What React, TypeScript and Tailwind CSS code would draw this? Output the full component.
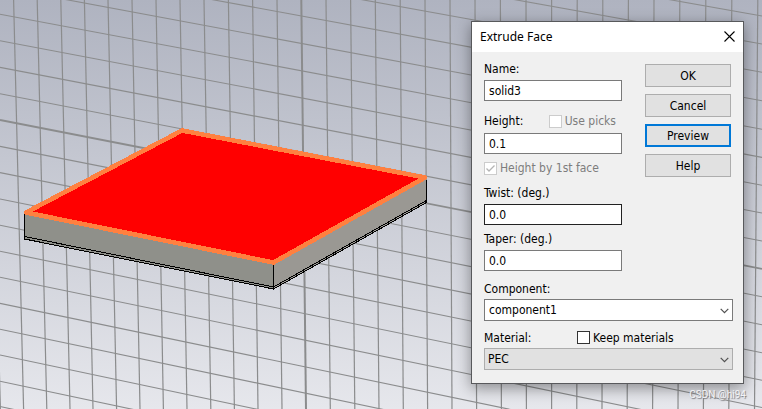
import { useState } from "react";
import type { ReactNode } from "react";

/* ------------------------------------------------------------------ */
/*  Scene geometry                                                     */
/* ------------------------------------------------------------------ */

// [x at the top edge, x at the bottom edge]
const uprights: [number, number][] = [
  [-11, 0], [13.6, 23.6], [37.2, 46.8], [60.8, 70], [84.4, 93], [108, 116.6],
  [132, 140], [156, 163.4], [180, 187], [204, 210.8], [228.4, 234.4],
  [252.6, 258], [277, 282], [301.3, 306], [326, 330.3], [350.6, 354.8],
  [375.3, 379], [400.2, 403.3], [425, 427.6], [450, 452], [475, 476.6],
  [500.4, 501.4], [526, 526.4], [551.6, 551.6], [577.2, 576.8],
  [602.8, 602], [628.4, 627.2], [654, 652.6], [679.8, 678], [705.8, 703.4],
  [731.8, 728.8], [757.8, 754.5],
];

// [y at the left edge, y at the right edge]
const diagonals: [number, number][] = [
  [-119, 16], [-92.7, 44], [-66, 72.3], [-39.4, 100.7], [-12.7, 129.2],
  [14.2, 157.4], [40.8, 185.2], [67.4, 213], [93.8, 241], [120, 268.8],
  [146.4, 296.7], [172.6, 324.7], [199, 352.7], [225.2, 380.3],
  [251.2, 407.5], [277.2, 434.5], [303.4, 461.8], [329.2, 488.8],
  [355, 515.8], [381.2, 542.8], [406.5, 569.8],
];

function Viewport() {
  return (
    <svg
      className="absolute inset-0 h-full w-full"
      viewBox="0 0 762 409"
      preserveAspectRatio="xMinYMin slice"
      aria-hidden="true"
    >
      <g stroke="#8b8c8d">
        {uprights.map(([top, bottom], i) => (
          <line key={top} x1={top} y1="0" x2={bottom} y2="409" strokeWidth={i === 13 || i === 0 ? 2 : 1.2} />
        ))}
        {diagonals.map(([left, right], i) => (
          <line key={left} x1="0" y1={left} x2="762" y2={right} strokeWidth={i === 9 ? 1.8 : 1.1} />
        ))}
      </g>
      {/* Slab sides */}
      <path d="M24.5 213 273.5 263V289L24.5 239Z" fill="#8f908a" />
      <path d="M273.5 263 426.5 178V202.5L273.5 289Z" fill="#9a9893" />
      <g fill="none" stroke="#000" shapeRendering="crispEdges">
        <path d="M24.5 213V239L273.5 289 426.5 202.5V180" />
        <path d="M24.5 236.5 273.5 287 426.5 200.5" />
        <path d="M273.5 263V289" />
      </g>
      {/* Picked face */}
      <path
        d="M26 212.5 182 130.5 425 177.5 273.5 262.5Z"
        fill="#ff0000"
        stroke="#ff8040"
        strokeWidth="4.6"
        strokeLinejoin="round"
        shapeRendering="crispEdges"
      />
    </svg>
  );
}

/* ------------------------------------------------------------------ */
/*  Form controls                                                      */
/* ------------------------------------------------------------------ */

function TextField({ id, value, strong }: { id: string; value: string; strong?: boolean }) {
  return (
    <input
      id={id}
      type="text"
      defaultValue={value}
      className={`block h-[21px] w-full border bg-white px-1 outline-none ${strong ? "border-[#222222]" : "border-[#7a7a7a]"}`}
    />
  );
}

function CheckBox({
  id,
  label,
  checked = false,
  disabled = false,
}: {
  id: string;
  label: string;
  checked?: boolean;
  disabled?: boolean;
}) {
  const [on, setOn] = useState(checked);

  return (
    <label htmlFor={id} className={`flex items-center gap-[3px] ${disabled ? "text-[#7d7d7d]" : ""}`}>
      <span className="relative h-[13px] w-[13px] shrink-0">
        <input
          id={id}
          type="checkbox"
          checked={on}
          disabled={disabled}
          onChange={(e) => setOn(e.target.checked)}
          className={`block h-[13px] w-[13px] appearance-none border bg-white ${disabled ? "border-[#cccccc]" : "border-[#333333]"}`}
        />
        {on && (
          <svg className="pointer-events-none absolute inset-0" width="13" height="13" viewBox="0 0 13 13">
            <path d="M2.5 6.5 5 9 10.5 3.5" fill="none" stroke="#b4b4b4" strokeWidth="1.3" />
          </svg>
        )}
      </span>
      {label}
    </label>
  );
}

function DropDown({ id, value, className }: { id: string; value: string; className: string }) {
  return (
    <div className="relative">
      <select
        id={id}
        defaultValue={value}
        className={`block h-[22px] w-full appearance-none border outline-none ${className}`}
      >
        <option>{value}</option>
      </select>
      <svg
        className="pointer-events-none absolute top-[9px] right-1"
        width="9"
        height="6"
        viewBox="0 0 9 6"
        fill="none"
        stroke="#505050"
        strokeWidth="1.2"
      >
        <path d="M.7.9 4.5 4.7 8.3.9" />
      </svg>
    </div>
  );
}

function PushButton({ children, primary }: { children: ReactNode; primary?: boolean }) {
  return (
    <button
      type="button"
      className={`h-[23px] w-full bg-[#e1e1e1] ${primary ? "border-2 border-[#0078d7]" : "border border-[#adadad]"}`}
    >
      {children}
    </button>
  );
}

/* ------------------------------------------------------------------ */
/*  Dialog                                                             */
/* ------------------------------------------------------------------ */

function ExtrudeDialog() {
  return (
    <section
      role="dialog"
      aria-labelledby="dialog-title"
      className="relative w-[273px] border border-[#58595c] bg-[#f0f0f0] shadow-[0_4px_14px_rgba(0,0,0,0.4)]"
    >
      <header className="flex h-[30px] items-center justify-between bg-white px-2">
        <h1 id="dialog-title" className="font-['Noto_Sans',sans-serif]">Extrude Face</h1>
        <button type="button" aria-label="Close" className="pb-0.5">
          <svg width="11" height="11" viewBox="0 0 11 11" stroke="#000" strokeWidth="1.1">
            <path d="M.5.5 10.5 10.5M10.5.5.5 10.5" />
          </svg>
        </button>
      </header>

      <form className="pt-2 pr-[10px] pb-[13px] pl-3">
        <div className="flex justify-between">
          <div className="w-[138px]">
            <label htmlFor="name" className="block h-5 leading-[18px]">Name:</label>
            <TextField id="name" value="solid3" />

            <div className="mt-2 flex h-6 items-center justify-between">
              <label htmlFor="height">Height:</label>
              <div className="pr-1.5">
                <CheckBox id="use-picks" label="Use picks" disabled />
              </div>
            </div>
            <TextField id="height" value="0.1" />

            <div className="flex h-7 items-center">
              <CheckBox id="first-face" label="Height by 1st face" checked disabled />
            </div>

            <label htmlFor="twist" className="block h-[22px] leading-[22px]">Twist: (deg.)</label>
            <TextField id="twist" value="0.0" strong />

            <label htmlFor="taper" className="mt-1 block h-[21px] leading-5">Taper: (deg.)</label>
            <TextField id="taper" value="0.0" />
          </div>

          <div className="mr-0.5 flex w-[86px] flex-col gap-[7px] pt-1">
            <PushButton>OK</PushButton>
            <PushButton>Cancel</PushButton>
            <PushButton primary>Preview</PushButton>
            <PushButton>Help</PushButton>
          </div>
        </div>

        <label htmlFor="component" className="mt-2 block h-5 leading-5">Component:</label>
        <DropDown id="component" value="component1" className="border-[#7a7a7a] bg-white px-1" />

        <div className="mt-1.5 flex h-[21px] items-center">
          <label htmlFor="material" className="w-[93px]">Material:</label>
          <CheckBox id="keep" label="Keep materials" />
        </div>
        <DropDown id="material" value="PEC" className="border-[#adadad] bg-[#e1e1e1] px-[3px]" />
      </form>
    </section>
  );
}

export default function App() {
  return (
    <main className="relative flex min-h-screen items-start justify-end overflow-hidden bg-linear-to-b from-[#afb3c0] to-[#e6e7ec] pt-[21px] pr-[18px] font-['DejaVu_Sans_Condensed','Noto_Sans',sans-serif] text-[12px] text-black">
      <Viewport />
      <ExtrudeDialog />
      <p className="absolute right-4 bottom-1.5 font-[Roboto,sans-serif] text-[10px] leading-4 text-[#f4f4f6] [text-shadow:1px_1px_1px_#77777b]">
        CSDN @hi94
      </p>
    </main>
  );
}
